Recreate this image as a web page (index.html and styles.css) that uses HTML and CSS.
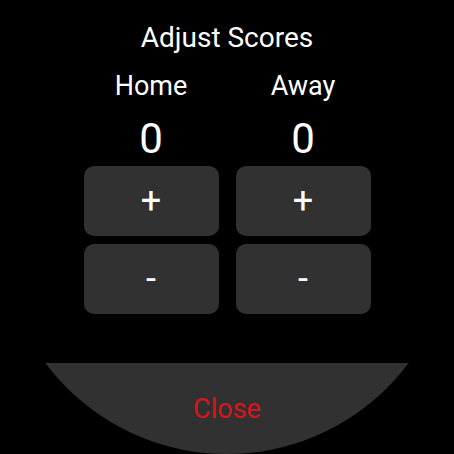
FILE: index.html
```html
<!DOCTYPE html>
<html lang="en">
<head>
    <meta charset="UTF-8">
    <meta name="viewport" content="width=device-width, initial-scale=1.0">
    <title>Adjust Scores</title>
    <link rel="stylesheet" href="styles.css">
</head>
<body>
    <div class="screen">
        <h1 class="title">Adjust Scores</h1>
        <div class="teams">
            <div class="team">
                <div class="team-name">Home</div>
                <div class="team-score">0</div>
            </div>
            <div class="team">
                <div class="team-name">Away</div>
                <div class="team-score">0</div>
            </div>
        </div>
        <div class="controls">
            <button class="btn">+</button>
            <button class="btn">+</button>
            <button class="btn btn-minus">-</button>
            <button class="btn btn-minus">-</button>
        </div>
        <button class="close-btn">Close</button>
    </div>
</body>
</html>
```

FILE: styles.css
```css
:root {
    --bg-color: #000;
    --text-color: #fff;
    --button-color: #313131;
    --danger-color: #d8151d;
}

html, body {
    margin: 0;
    padding: 0;
    background: var(--bg-color);
}

body {
    font-family: Roboto, "Noto Sans", sans-serif;
    color: var(--text-color);
    width: 454px;
    height: 454px;
    overflow: hidden;
}

.screen {
    width: 454px;
    height: 454px;
    border-radius: 50%;
    overflow: hidden;
    display: flex;
    flex-direction: column;
    align-items: center;
}

.title {
    margin: 22px 0 0;
    font-size: 28px;
    font-weight: 400;
    line-height: 32px;
}

.teams {
    display: grid;
    grid-template-columns: 135px 135px;
    column-gap: 17px;
    margin-top: 16px;
}

.team {
    display: flex;
    flex-direction: column;
    align-items: center;
}

.team-name {
    font-size: 27px;
    line-height: 32px;
}

.team-score {
    font-size: 42px;
    line-height: 48px;
    margin-top: 13px;
}

.controls {
    display: grid;
    grid-template-columns: 135px 135px;
    grid-auto-rows: 70px;
    gap: 8px 17px;
    margin-top: 3px;
}

.btn {
    background: var(--button-color);
    border: none;
    border-radius: 10px;
    color: var(--text-color);
    font-family: Roboto, "Noto Sans", sans-serif;
    font-size: 36px;
    padding: 0;
    line-height: 1;
}

.close-btn {
    margin-top: 49px;
    width: 454px;
    height: 91px;
    flex-shrink: 0;
    border: none;
    background: var(--button-color);
    color: var(--danger-color);
    font-family: Roboto, "Noto Sans", sans-serif;
    font-size: 27px;
    padding: 0;
}
```
